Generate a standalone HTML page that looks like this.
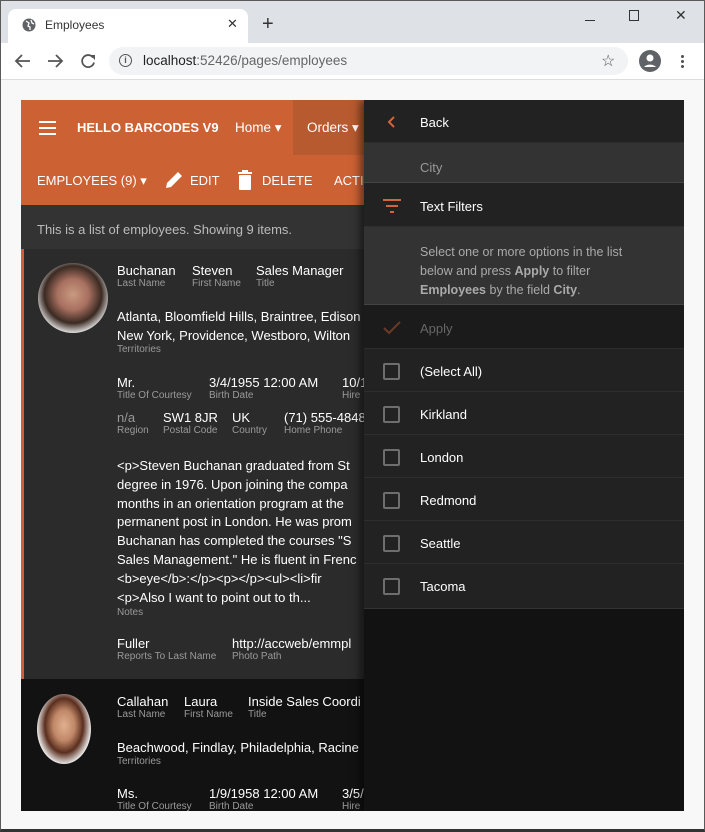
<!DOCTYPE html>
<html><head><meta charset="utf-8"><style>
*{margin:0;padding:0;box-sizing:border-box}
body{width:705px;height:832px;overflow:hidden;background:#f8f8f8;font-family:"Liberation Sans",sans-serif;position:relative}
.a{position:absolute;white-space:nowrap}
.v{color:#fff;font-size:13px}
.l{color:#9a9a9a;font-size:10px}
.mi{position:absolute;left:0;width:320px;height:43px;border-bottom:1px solid #2e2e2e;background:#222}
.cb{position:absolute;left:19px;top:14px;width:17px;height:17px;border:2px solid #6e6e6e;border-radius:2px}
.mt{position:absolute;left:56px;top:15px;color:#fff;font-size:13px}
</style></head><body>
<div class="a" style="left:0;top:0;width:705px;height:832px;border:1px solid #5a5a5a;border-bottom:3px solid #333"></div>
<!-- tab bar -->
<div class="a" style="left:1px;top:1px;width:703px;height:42px;background:#dee1e6"></div>
<div class="a" style="left:8px;top:9px;width:240px;height:34px;background:#fff;border-radius:8px 8px 0 0"></div>
<svg class="a" style="left:22px;top:18px" width="14" height="14" viewBox="0 0 14 14"><circle cx="7" cy="7" r="6.5" fill="#5f6368"/><path d="M4 3l3 2-1 3 2 1v3M9 2l1 3 2 1" stroke="#fff" stroke-width="1.3" fill="none"/></svg>
<div class="a" style="left:45px;top:18px;font-size:12px;color:#333">Employees</div>
<div class="a" style="left:227px;top:16px;font-size:13px;color:#333">✕</div>
<div class="a" style="left:262px;top:13px;font-size:20px;color:#333">+</div>
<div class="a" style="left:585px;top:20px;width:10px;height:1px;background:#333"></div>
<div class="a" style="left:629px;top:10px;width:10px;height:11px;border:1.3px solid #333"></div>
<div class="a" style="left:675px;top:7px;font-size:14px;color:#333">✕</div>
<!-- toolbar -->
<div class="a" style="left:1px;top:43px;width:703px;height:37px;background:#fff;border-bottom:1px solid #ddd"></div>
<svg class="a" style="left:14px;top:53px" width="84" height="16" viewBox="0 0 84 16"><path d="M2 8h14M8 2L2 8l6 6M34 8h14M42 2l6 6-6 6" stroke="#555" stroke-width="1.8" fill="none"/><path d="M79 4.5a6 6 0 1 0 1 5" stroke="#555" stroke-width="1.8" fill="none"/><path d="M76 2h5v5z" fill="#555"/></svg>
<div class="a" style="left:109px;top:47px;width:519px;height:28px;background:#f1f3f4;border-radius:14px"></div>
<div class="a" style="left:119px;top:54px;width:13px;height:13px;border:1.5px solid #555;border-radius:50%;font-size:9px;text-align:center;line-height:10px;color:#555;font-weight:bold">i</div>
<div class="a" style="left:143px;top:53px;font-size:13.5px;color:#222">localhost<span style="color:#666">:52426/pages/employees</span></div>
<div class="a" style="left:601px;top:51px;font-size:16px;color:#555">☆</div>
<svg class="a" style="left:639px;top:50px" width="22" height="22" viewBox="0 0 22 22"><circle cx="11" cy="11" r="11" fill="#5f6368"/><circle cx="11" cy="8" r="3.5" fill="#fff"/><path d="M5 17a7 5 0 0 1 12 0z" fill="#fff"/></svg>
<div class="a" style="left:681px;top:54px;width:3px;height:14px;background:radial-gradient(circle,#555 1.4px,transparent 1.6px) 0 0/3px 5px"></div>
<!-- app frame -->
<div class="a" style="left:21px;top:100px;width:663px;height:711px;background:#121212;overflow:hidden">
 <div class="a" style="left:0;top:0;width:663px;height:105px;background:#cc6133"></div>
 <div class="a" style="left:272px;top:0;width:72px;height:55px;background:#b85a2f"></div>
 <div class="a" style="left:18px;top:21px;width:17px;height:2px;background:#fff;box-shadow:0 6px #fff,0 12px #fff"></div>
 <div class="a" style="left:56px;top:20px;color:#fff;font-size:13px;font-weight:bold">HELLO BARCODES V9</div>
 <div class="a" style="left:214px;top:20px;color:#fff;font-size:13.5px">Home ▾</div>
 <div class="a" style="left:286px;top:20px;color:#fff;font-size:13.5px">Orders ▾</div>
 <div class="a" style="left:16px;top:73px;color:#fff;font-size:13px">EMPLOYEES (9) ▾</div>
 <svg class="a" style="left:143px;top:70px" width="20" height="20" viewBox="0 0 20 20"><path d="M2 18l1-5L14 2l4 4L7 17z" fill="#fff"/></svg>
 <div class="a" style="left:169px;top:73px;color:#fff;font-size:13px">EDIT</div>
 <svg class="a" style="left:216px;top:70px" width="16" height="20" viewBox="0 0 16 20"><rect x="1" y="2" width="14" height="2" fill="#fff"/><rect x="5" y="0" width="6" height="3" fill="#fff"/><rect x="2" y="5" width="12" height="15" rx="1" fill="#fff"/></svg>
 <div class="a" style="left:241px;top:73px;color:#fff;font-size:13px">DELETE</div>
 <div class="a" style="left:313px;top:73px;color:#fff;font-size:13px">ACTI</div>
 <div class="a" style="left:0;top:105px;width:663px;height:44px;background:#333"></div>
 <div class="a" style="left:16px;top:122px;color:#bbb;font-size:13px">This is a list of employees. Showing 9 items.</div>
 <!-- item 1 -->
 <div class="a" style="left:0;top:149px;width:663px;height:430px;background:#2b2b2b;border-left:3px solid #cc6133"></div>
 <div class="a" style="left:17px;top:163px;width:70px;height:70px;border-radius:50%;background:radial-gradient(circle at 50% 45%,#c99a80 0,#a87060 30%,#3a2a22 55%,#e8e8e8 75%)"></div>
 <div class="a v" style="left:96px;top:163px">Buchanan</div><div class="a l" style="left:96px;top:178px">Last Name</div>
 <div class="a v" style="left:171px;top:163px">Steven</div><div class="a l" style="left:171px;top:178px">First Name</div>
 <div class="a v" style="left:235px;top:163px">Sales Manager</div><div class="a l" style="left:235px;top:178px">Title</div>
 <div class="a v" style="left:96px;top:209px">Atlanta, Bloomfield Hills, Braintree, Edison</div>
 <div class="a v" style="left:96px;top:228px">New York, Providence, Westboro, Wilton</div>
 <div class="a l" style="left:96px;top:244px">Territories</div>
 <div class="a v" style="left:96px;top:275px">Mr.</div><div class="a l" style="left:96px;top:290px">Title Of Courtesy</div>
 <div class="a v" style="left:188px;top:275px">3/4/1955 12:00 AM</div><div class="a l" style="left:188px;top:290px">Birth Date</div>
 <div class="a v" style="left:321px;top:275px">10/1</div><div class="a l" style="left:321px;top:290px">Hire</div>
 <div class="a v" style="left:96px;top:310px;color:#999">n/a</div><div class="a l" style="left:96px;top:325px">Region</div>
 <div class="a v" style="left:142px;top:310px">SW1 8JR</div><div class="a l" style="left:142px;top:325px">Postal Code</div>
 <div class="a v" style="left:211px;top:310px">UK</div><div class="a l" style="left:211px;top:325px">Country</div>
 <div class="a v" style="left:263px;top:310px">(71) 555-4848</div><div class="a l" style="left:263px;top:325px">Home Phone</div>
 <div class="a v" style="left:96px;top:357px;line-height:18.8px">&lt;p&gt;Steven Buchanan graduated from St<br>degree in 1976. Upon joining the compa<br>months in an orientation program at the<br>permanent post in London. He was prom<br>Buchanan has completed the courses "S<br>Sales Management." He is fluent in Frenc<br>&lt;b&gt;eye&lt;/b&gt;:&lt;/p&gt;&lt;p&gt;&lt;/p&gt;&lt;ul&gt;&lt;li&gt;fir<br>&lt;p&gt;Also I want to point out to th...</div>
 <div class="a l" style="left:96px;top:507px">Notes</div>
 <div class="a v" style="left:96px;top:536px">Fuller</div><div class="a l" style="left:96px;top:551px">Reports To Last Name</div>
 <div class="a v" style="left:211px;top:536px">http://accweb/emmpl</div><div class="a l" style="left:211px;top:551px">Photo Path</div>
 <!-- item 2 -->
 <div class="a" style="left:16px;top:594px;width:54px;height:70px;border-radius:50%;background:radial-gradient(ellipse at 50% 45%,#e0b090 0,#c08868 28%,#5a2e1e 50%,#f0f0f0 72%)"></div>
 <div class="a v" style="left:96px;top:594px">Callahan</div><div class="a l" style="left:96px;top:609px">Last Name</div>
 <div class="a v" style="left:163px;top:594px">Laura</div><div class="a l" style="left:163px;top:609px">First Name</div>
 <div class="a v" style="left:227px;top:594px">Inside Sales Coordi</div><div class="a l" style="left:227px;top:609px">Title</div>
 <div class="a v" style="left:96px;top:640px">Beachwood, Findlay, Philadelphia, Racine</div><div class="a l" style="left:96px;top:656px">Territories</div>
 <div class="a v" style="left:96px;top:686px">Ms.</div><div class="a l" style="left:96px;top:701px">Title Of Courtesy</div>
 <div class="a v" style="left:188px;top:686px">1/9/1958 12:00 AM</div><div class="a l" style="left:188px;top:701px">Birth Date</div>
 <div class="a v" style="left:321px;top:686px">3/5/</div><div class="a l" style="left:321px;top:701px">Hire</div>
 <!-- panel -->
 <div class="a" style="left:343px;top:0;width:320px;height:711px;background:#121212;box-shadow:-4px 0 8px rgba(0,0,0,.5)">
  <div class="mi" style="top:0;height:43px"><svg class="a" style="left:23px;top:15px" width="10" height="14" viewBox="0 0 10 14"><path d="M7 2L2 7l5 5" stroke="#d2643a" stroke-width="2" fill="none"/></svg><div class="mt">Back</div></div>
  <div class="mi" style="top:43px;height:40px;background:#333;border-bottom:1px solid #444"><div class="mt" style="color:#999;top:17px">City</div></div>
  <div class="mi" style="top:83px;height:44px"><div class="a" style="left:19px;top:16px;width:18px;height:2px;background:#d2643a"></div><div class="a" style="left:22px;top:22px;width:12px;height:2px;background:#d2643a"></div><div class="a" style="left:26px;top:28px;width:4px;height:2px;background:#d2643a"></div><div class="mt" style="top:16px">Text Filters</div></div>
  <div class="mi" style="top:127px;height:78px;background:#333;border-bottom:1px solid #444"><div class="a" style="left:56px;top:16px;color:#aaa;font-size:12.5px;line-height:19px">Select one or more options in the list<br>below and press <b>Apply</b> to filter<br><b>Employees</b> by the field <b>City</b>.</div></div>
  <div class="mi" style="top:205px;height:44px;background:#1b1b1b"><svg class="a" style="left:19px;top:16px" width="18" height="14" viewBox="0 0 18 14"><path d="M1 7l5 5L17 1" stroke="#6b3a26" stroke-width="2" fill="none"/></svg><div class="mt" style="color:#666;top:16px">Apply</div></div>
  <div class="mi" style="top:249px"><div class="cb"></div><div class="mt">(Select All)</div></div>
  <div class="mi" style="top:292px"><div class="cb"></div><div class="mt">Kirkland</div></div>
  <div class="mi" style="top:335px"><div class="cb"></div><div class="mt">London</div></div>
  <div class="mi" style="top:378px"><div class="cb"></div><div class="mt">Redmond</div></div>
  <div class="mi" style="top:421px"><div class="cb"></div><div class="mt">Seattle</div></div>
  <div class="mi" style="top:464px;height:45px;border-bottom:1px solid #333"><div class="cb"></div><div class="mt">Tacoma</div></div>
 </div>
</div>
</body></html>
